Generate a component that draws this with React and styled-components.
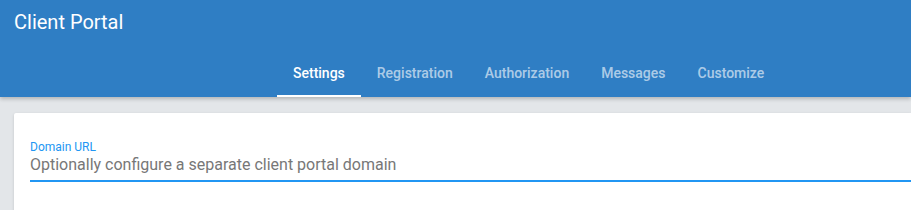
import React from "react";
import styled, { createGlobalStyle } from "styled-components";

const Global = createGlobalStyle`
  html, body { margin: 0; padding: 0; background: #e3e6e9; }
  body { font-family: Roboto, "Liberation Sans", sans-serif; overflow: hidden; }
`;

const Page = styled.div`
  width: 911px;
  height: 210px;
  background: #e3e6e9;
  overflow: hidden;
`;

const Header = styled.header`
  background: #2f7ec4;
  color: #fff;
  box-shadow: 0 2px 4px rgba(0, 0, 0, 0.22);
  position: relative;
  z-index: 1;
`;

const TitleRow = styled.div`
  height: 49px;
  display: flex;
  align-items: center;
  padding: 0 14px;
  box-sizing: border-box;
`;

const Title = styled.h1`
  margin: 0;
  font-size: 20px;
  font-weight: 400;
  letter-spacing: 0;
  position: relative;
  top: -3px;
`;

const Tabs = styled.nav`
  display: flex;
  height: 48px;
  padding-left: 277px;
`;

const Tab = styled.div`
  position: relative;
  display: flex;
  align-items: center;
  padding: 0 16px;
  font-size: 14px;
  font-weight: 500;
  color: ${(p) => (p.$active ? "#ffffff" : "rgba(255,255,255,0.62)")};
  &::after {
    content: "";
    position: absolute;
    left: 0;
    right: 0;
    bottom: 0;
    height: 2px;
    background: ${(p) => (p.$active ? "#ffffff" : "transparent")};
  }
`;

const Content = styled.main`
  padding: 16px 0 0 14px;
`;

const Card = styled.section`
  background: #fff;
  border-radius: 2px 0 0 0;
  box-shadow: 0 1px 3px rgba(0, 0, 0, 0.15);
  padding: 27px 0 40px 16px;
`;

const Field = styled.div`
  display: flex;
  flex-direction: column;
  border-bottom: 2px solid #2196f3;
  padding-bottom: 5px;
`;

const Label = styled.label`
  font-size: 12px;
  color: #2196f3;
  line-height: 14px;
`;

const Input = styled.div`
  font-size: 16px;
  color: #777777;
  line-height: 20px;
  margin-top: 1px;
`;

const tabs = ["Settings", "Registration", "Authorization", "Messages", "Customize"];

export default function App() {
  return (
    <Page>
      <Global />
      <Header>
        <TitleRow>
          <Title>Client Portal</Title>
        </TitleRow>
        <Tabs>
          {tabs.map((t, i) => (
            <Tab key={t} $active={i === 0}>
              {t}
            </Tab>
          ))}
        </Tabs>
      </Header>
      <Content>
        <Card>
          <Field>
            <Label>Domain URL</Label>
            <Input>Optionally configure a separate client portal domain</Input>
          </Field>
        </Card>
      </Content>
    </Page>
  );
}
